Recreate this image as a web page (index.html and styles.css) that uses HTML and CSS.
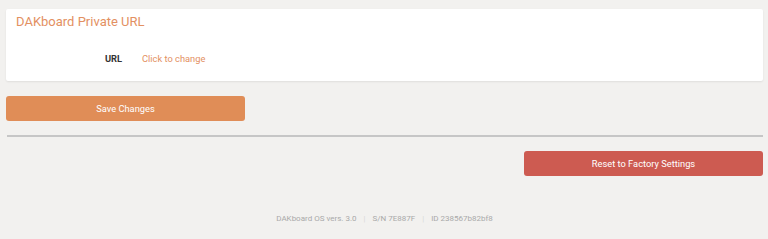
FILE: index.html
```html
<!DOCTYPE html>
<html lang="en">
<head>
  <meta charset="UTF-8">
  <title>DAKboard Settings</title>
  <link rel="stylesheet" href="styles.css">
</head>
<body>
  <div class="page">
    <!-- Private URL card -->
    <div class="card">
      <h2 class="card-title">DAKboard Private URL</h2>
      <div class="field-row">
        <span class="field-label">URL</span>
        <a class="field-value" href="#">Click to change</a>
      </div>
    </div>

    <div class="actions">
      <button type="button" class="button save">Save Changes</button>
    </div>

    <hr class="divider">

    <div class="actions right">
      <button type="button" class="button reset">Reset to Factory Settings</button>
    </div>

    <!-- Footer -->
    <p class="footer">
      <span>DAKboard OS vers. 3.0</span>
      <span class="sep">|</span>
      <span>S/N 7E887F</span>
      <span class="sep">|</span>
      <span>ID 238567b82bf8</span>
    </p>
  </div>
</body>
</html>
```

FILE: styles.css
```css
* {
  margin: 0;
  padding: 0;
  box-sizing: border-box;
}

body {
  background-color: #f2f1ef;
  font-family: Roboto, "Liberation Sans", sans-serif;
}

.page {
  padding: 9px 5px 0 6px;
}

/* Card */
.card {
  background-color: #fff;
  border-radius: 2px;
  box-shadow: 0 1px 2px rgba(0, 0, 0, 0.08);
  height: 72px;
  padding: 5px 10px 0 10px;
}

.card-title {
  color: #e39062;
  font-size: 13px;
  font-weight: 400;
  line-height: 16px;
}

.field-row {
  display: grid;
  grid-template-columns: 106px auto;
  column-gap: 20px;
  align-items: center;
  margin-top: 22px;
  font-size: 9.3px;
  line-height: 14px;
}

.field-label {
  text-align: right;
  font-weight: 700;
  color: #333;
}

.field-value {
  color: #e39062;
  text-decoration: none;
}

/* Buttons */
.actions {
  display: flex;
}

.actions.right {
  justify-content: flex-end;
}

.button {
  width: 239px;
  height: 25px;
  border: none;
  border-radius: 3px;
  color: #fff;
  font-family: Roboto, "Liberation Sans", sans-serif;
  font-size: 9.3px;
  cursor: pointer;
}

.button.save {
  background-color: #e08d57;
  margin-top: 15px;
}

.button.reset {
  background-color: #cd5b51;
  margin-top: 14px;
}

.divider {
  border: none;
  border-top: 2px solid #c6c6c6;
  margin: 14px 0 0 1px;
}

/* Footer */
.footer {
  display: flex;
  justify-content: center;
  gap: 7px;
  margin-top: 37px;
  font-size: 8px;
  line-height: 12px;
  color: #a9a9a9;
}

.footer .sep {
  color: #d8d8d8;
}
```
